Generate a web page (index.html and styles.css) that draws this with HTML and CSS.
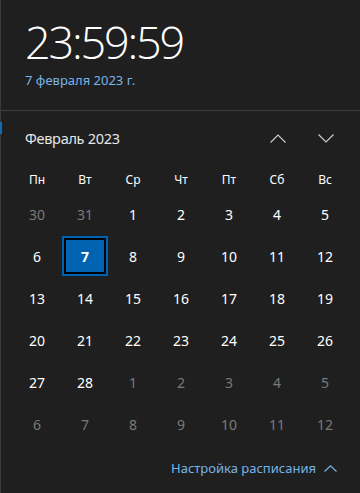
FILE: index.html
```html
<!DOCTYPE html>
<html lang="ru">
<head>
<meta charset="utf-8">
<link rel="stylesheet" href="styles.css">
</head>
<body>
<div class="flyout">
  <div class="clock">
    <div class="time">23:59:59</div>
    <div class="date">7 февраля 2023 г.</div>
  </div>
  <div class="sep"></div>
  <div class="cal">
    <span class="focus-mark"></span>
    <div class="cal-head">
      <div class="month">Февраль 2023</div>
      <div class="nav">
        <span class="nav-btn"><svg width="16" height="9" viewBox="0 0 16 9"><polyline points="0.5,8.5 8,1 15.5,8.5" fill="none" stroke="#d0d0d0" stroke-width="1.1"/></svg></span>
        <span class="nav-btn"><svg width="16" height="9" viewBox="0 0 16 9"><polyline points="0.5,0.5 8,8 15.5,0.5" fill="none" stroke="#d0d0d0" stroke-width="1.1"/></svg></span>
      </div>
    </div>
    <div class="grid">
      <div class="wd">Пн</div><div class="wd">Вт</div><div class="wd">Ср</div><div class="wd">Чт</div><div class="wd">Пт</div><div class="wd">Сб</div><div class="wd">Вс</div>

      <div class="d other">30</div><div class="d other">31</div><div class="d">1</div><div class="d">2</div><div class="d">3</div><div class="d">4</div><div class="d">5</div>
      <div class="d">6</div><div class="d today"><span>7</span></div><div class="d">8</div><div class="d">9</div><div class="d">10</div><div class="d">11</div><div class="d">12</div>
      <div class="d">13</div><div class="d">14</div><div class="d">15</div><div class="d">16</div><div class="d">17</div><div class="d">18</div><div class="d">19</div>
      <div class="d">20</div><div class="d">21</div><div class="d">22</div><div class="d">23</div><div class="d">24</div><div class="d">25</div><div class="d">26</div>
      <div class="d">27</div><div class="d">28</div><div class="d other">1</div><div class="d other">2</div><div class="d other">3</div><div class="d other">4</div><div class="d other">5</div>
      <div class="d other">6</div><div class="d other">7</div><div class="d other">8</div><div class="d other">9</div><div class="d other">10</div><div class="d other">11</div><div class="d other">12</div>
    </div>
  </div>
  <div class="footer">
    <span class="link">Настройка расписания</span>
    <svg width="13" height="7" viewBox="0 0 13 7"><polyline points="0.5,6.5 6.5,0.8 12.5,6.5" fill="none" stroke="#78b4e8" stroke-width="1.2"/></svg>
  </div>
</div>
</body>
</html>
```
FILE: styles.css
```css
html, body {
  margin: 0;
  padding: 0;
  background: #1f1f1f;
}
body {
  width: 360px;
  height: 493px;
  overflow: hidden;
  font-family: "Noto Sans", "Open Sans", sans-serif;
  color: #ffffff;
}
.flyout {
  width: 360px;
  height: 493px;
  box-sizing: border-box;
  border-left: 1px solid #3a3a3a;
  display: flex;
  flex-direction: column;
}
.clock {
  padding: 17px 0 0 24px;
  height: 95px;
  box-sizing: border-box;
}
.time {
  font-family: "Open Sans", sans-serif;
  font-weight: 300;
  font-size: 45px;
  line-height: 50px;
  letter-spacing: -2.2px;
  color: #ffffff;
}
.date {
  margin-top: 4px;
  font-size: 13px;
  line-height: 18px;
  color: #78b4e8;
}
.sep {
  height: 1px;
  background: #3e3e3e;
  margin-top: 15px;
  margin-left: -1px;
}
.cal {
  position: relative;
  padding: 0 10px 0 12px;
}
.focus-mark {
  position: absolute;
  left: -1px;
  top: 11px;
  width: 2px;
  height: 12px;
  background: #0a6fb8;
}
.cal-head {
  display: flex;
  align-items: center;
  justify-content: space-between;
  height: 54px;
}
.month {
  padding-left: 12px;
  font-size: 14.5px;
  letter-spacing: -0.3px;
  color: #e6e6e6;
}
.nav {
  display: flex;
}
.nav-btn {
  width: 48px;
  height: 40px;
  display: flex;
  align-items: center;
  justify-content: center;
}
.grid {
  display: grid;
  grid-template-columns: repeat(7, 48px);
  grid-auto-rows: 42px;
  grid-template-rows: 28px;
}
.wd {
  display: flex;
  align-items: center;
  justify-content: center;
  font-size: 12px;
  color: #ffffff;
}
.d {
  display: flex;
  align-items: center;
  justify-content: center;
  font-size: 14px;
  color: #ffffff;
}
.d.other {
  color: #7a7a7a;
}
.d.today span {
  box-sizing: border-box;
  width: 46px;
  height: 40px;
  display: flex;
  align-items: center;
  justify-content: center;
  background: #0063b1;
  border: 2px solid #0063b1;
  box-shadow: inset 0 0 0 2px #000000;
  font-weight: 700;
}
.footer {
  display: flex;
  align-items: center;
  justify-content: flex-end;
  gap: 8px;
  padding-right: 23px;
  height: 46px;
}
.link {
  font-size: 13px;
  color: #78b4e8;
}
```
